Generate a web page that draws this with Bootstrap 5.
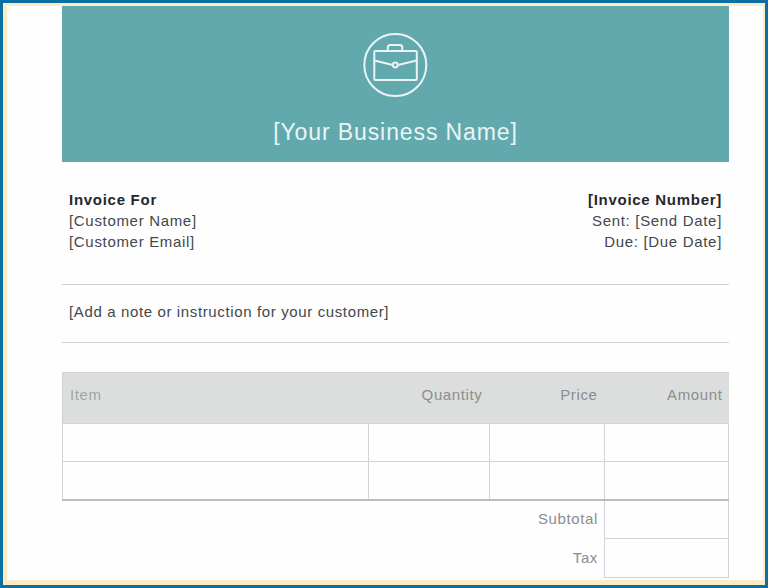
<!DOCTYPE html>
<html lang="en">

<head>
    <meta charset="UTF-8">
    <meta name="viewport" content="width=device-width, initial-scale=1.0">
    <title>Invoice</title>
    <link rel="stylesheet" href="https://cdn.jsdelivr.net/npm/bootstrap@5.3.0/dist/css/bootstrap.min.css">
    <style>
        html, body {
            height: 588px;
            overflow: hidden;
        }

        body {
            background-color: #0b6fa3;
            font-family: "Liberation Sans", Arial, sans-serif;
            color: #44474c;
            padding: 3px;
        }

        .frame-inner {
            height: 582px;
            background-color: #fefefe;
            border: solid #fcecc6;
            border-width: 3px 2px 5px 4px;
            padding-left: 55px;
            padding-right: 34px;
            overflow: hidden;
        }

        .sheet-head {
            background-color: #62a9ad;
            height: 156px;
            color: #e9f5f5;
            padding-top: 26px;
        }

        .biz-name {
            font-size: 23px;
            letter-spacing: .9px;
            line-height: 28px;
            margin-top: 20px;
        }

        .bill-info {
            font-size: 15px;
            letter-spacing: .68px;
            line-height: 21px;
            padding: 27px 7px 30px;
            height: 122px;
        }

        .bill-info strong {
            color: #25272b;
            letter-spacing: .72px;
        }

        .note-row {
            font-size: 15px;
            letter-spacing: .63px;
            line-height: 21px;
            height: 59px;
            padding: 16px 7px 0;
            border-top: 1px solid #d0d1d2;
            border-bottom: 1px solid #d0d1d2;
            margin-bottom: 29px;
        }

        .inv-table {
            width: 666px;
            table-layout: fixed;
            border-collapse: collapse;
            font-size: 15px;
            letter-spacing: .63px;
            color: #8a8d90;
        }

        .inv-table th {
            background-color: #dcdedd;
            font-weight: 400;
            height: 51px;
            padding: 0 7px 5px;
            border: 1px solid #d0d2d2;
            border-bottom: 0;
            border-right: 0;
            border-left-width: 0;
        }

        .inv-table th:first-child {
            border-left-width: 1px;
            color: #a2a5a7;
        }

        .inv-table th:last-child {
            border-right-width: 1px;
            padding-right: 6px;
        }

        .inv-table td {
            height: 39px;
            padding: 0 7px;
        }

        .inv-table .row-first td {
            height: 38px;
        }

        .inv-table .cell-line {
            border: 1px solid #d2d3da;
        }

        .inv-table .rule-bottom td {
            height: 38px;
            border-bottom: 2px solid #b9bcc0;
        }

        .inv-table .total-label {
            padding-right: 6px;
        }
    </style>
</head>

<body>
    <div class="frame-inner">
        <!-- Header band -->
        <div class="sheet-head text-center">
            <svg width="66" height="66" viewBox="0.7 0 66 66" fill="none" stroke="#e9f5f5" stroke-width="2"
                stroke-linejoin="round" stroke-linecap="round">
                <circle cx="33" cy="33" r="31" />
                <rect x="12" y="19" width="42.5" height="29" rx="1" />
                <path d="M25.5 19 V15.5 Q25.5 13 28 13 H37.5 Q40 13 40 15.5 V19" />
                <path d="M12 28.5 L30.5 33 M35.5 33 L54.5 28.5" />
                <circle cx="33" cy="33" r="2.4" />
            </svg>
            <div class="biz-name">[Your Business Name]</div>
        </div>

        <!-- Customer and invoice details -->
        <div class="bill-info d-flex justify-content-between">
            <div>
                <strong>Invoice For</strong><br>
                [Customer Name]<br>
                [Customer Email]
            </div>
            <div class="text-end">
                <strong>[Invoice Number]</strong><br>
                Sent: [Send Date]<br>
                Due: [Due Date]
            </div>
        </div>

        <div class="note-row">[Add a note or instruction for your customer]</div>

        <!-- Line items -->
        <table class="inv-table">
            <colgroup>
                <col style="width: 306px">
                <col style="width: 121px">
                <col style="width: 115px">
                <col style="width: 124px">
            </colgroup>
            <thead>
                <tr>
                    <th>Item</th>
                    <th class="text-end">Quantity</th>
                    <th class="text-end">Price</th>
                    <th class="text-end">Amount</th>
                </tr>
            </thead>
            <tbody>
                <tr class="row-first">
                    <td class="cell-line"></td>
                    <td class="cell-line"></td>
                    <td class="cell-line"></td>
                    <td class="cell-line"></td>
                </tr>
                <tr class="rule-bottom">
                    <td class="cell-line"></td>
                    <td class="cell-line"></td>
                    <td class="cell-line"></td>
                    <td class="cell-line"></td>
                </tr>
                <tr>
                    <td colspan="3" class="text-end total-label">Subtotal</td>
                    <td class="cell-line"></td>
                </tr>
                <tr>
                    <td colspan="3" class="text-end total-label">Tax</td>
                    <td class="cell-line"></td>
                </tr>
            </tbody>
        </table>
    </div>
    <script src="https://cdn.jsdelivr.net/npm/bootstrap@5.3.0/dist/js/bootstrap.bundle.min.js"></script>
</body>

</html>
